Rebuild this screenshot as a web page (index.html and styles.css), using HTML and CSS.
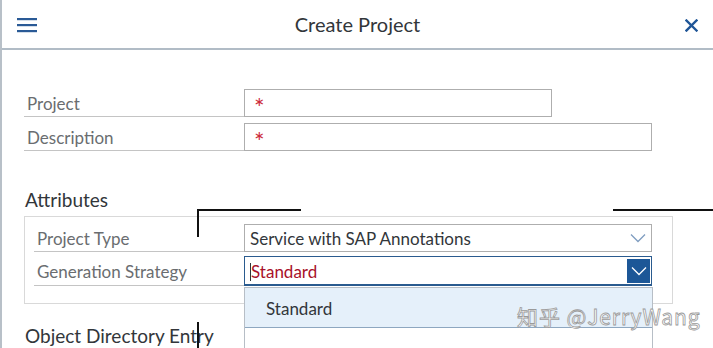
FILE: index.html
```html
<!DOCTYPE html>
<html>
<head>
<meta charset="utf-8">
<link rel="stylesheet" href="styles.css">
</head>
<body>
<div class="dialog">
  <header class="bar">
    <span class="menu">
      <svg width="20" height="16" viewBox="0 0 20 16"><rect x="0" y="1" width="20" height="2.2" fill="#2a5a96"/><rect x="0" y="7" width="20" height="2.2" fill="#2a5a96"/><rect x="0" y="13" width="20" height="2.2" fill="#2a5a96"/></svg>
    </span>
    <span class="title">Create Project</span>
    <span class="close">
      <svg width="13" height="13" viewBox="0 0 13 13"><path d="M1.5 1.5 L11.5 11.5 M11.5 1.5 L1.5 11.5" stroke="#1f5597" stroke-width="2.4" stroke-linecap="square"/></svg>
    </span>
  </header>

  <div class="content">
    <div class="row">
      <div class="label">Project</div>
      <div class="input short"><span class="req">*</span></div>
    </div>
    <div class="row">
      <div class="label">Description</div>
      <div class="input"><span class="req">*</span></div>
    </div>

    <h2 class="section">Attributes</h2>
    <div class="panel">
      <div class="row">
        <div class="label inner">Project Type</div>
        <div class="input select">
          <span class="val">Service with SAP Annotations</span>
          <span class="arrow">
            <svg width="16" height="10" viewBox="0 0 16 10"><path d="M1 1.5 L8 8.5 L15 1.5" fill="none" stroke="#7f9dc0" stroke-width="1.3"/></svg>
          </span>
        </div>
      </div>
      <div class="row">
        <div class="label inner low">Generation Strategy</div>
        <div class="input select focus">
          <span class="caret"></span><span class="val red">Standard</span>
          <span class="btn">
            <svg width="16" height="10" viewBox="0 0 16 10"><path d="M1 1.5 L8 8.5 L15 1.5" fill="none" stroke="#ffffff" stroke-width="1.3"/></svg>
          </span>
        </div>
      </div>
    </div>

    <h2 class="section second">Object Directory Entry</h2>
  </div>

  <div class="popover">
    <div class="item">Standard</div>
  </div>

  <div class="mark h1"></div>
  <div class="mark v1"></div>
  <div class="mark h2"></div>
  <div class="mark v2"></div>

  <div class="watermark">知乎 @JerryWang</div>
</div>
</body>
</html>
```

FILE: styles.css
```css
html, body {
  margin: 0;
  padding: 0;
  background: #ffffff;
}
body {
  width: 713px;
  height: 348px;
  overflow: hidden;
  font-family: "Lato", "Open Sans", sans-serif;
}
.dialog {
  position: relative;
  width: 713px;
  height: 348px;
  border-left: 2px solid #b8c0c8;
  box-sizing: border-box;
}
.bar {
  height: 48px;
  border-bottom: 2px solid #b1bcc6;
  display: flex;
  align-items: center;
  padding: 0 16px 0 15px;
}
.menu {
  flex: 1;
  display: flex;
  padding-top: 1px;
}
.title {
  font-size: 20px;
  color: #32363a;
  padding-bottom: 1px;
}
.close {
  flex: 1;
  display: flex;
  justify-content: flex-end;
  padding-top: 2px;
  margin-right: -1px;
}
.content {
  padding: 39px 0 0 22px;
}
.row {
  display: flex;
  height: 28px;
  margin-bottom: 6px;
}
.label {
  width: 217px;
  padding-left: 3px;
  padding-top: 2px;
  height: 25px;
  border-bottom: 1px solid #c4c4c4;
  font-size: 17px;
  color: #6a6d70;
  line-height: 26px;
}
.input {
  border: 1px solid #aeaeae;
  display: flex;
  align-items: center;
  padding-left: 9px;
  box-sizing: border-box;
  width: 408px;
  height: 28px;
}
.input.short {
  width: 308px;
}
.req {
  color: #cc2a3a;
  font-size: 25px;
  line-height: 1;
  padding-top: 9px;
}
.section {
  margin: 37px 0 0 1px;
  font-size: 19px;
  font-weight: normal;
  color: #32363a;
  line-height: 24px;
}
.panel {
  margin-top: 4px;
  width: 649px;
  height: 88px;
  border: 1px solid #d9d9d9;
  box-sizing: border-box;
  padding: 7px 0 0 9px;
}
.panel .row {
  margin-bottom: 4px;
}
.label.inner {
  width: 207px;
  padding-left: 3px;
}
.label.low {
  padding-top: 3px;
  height: 26px;
}
.select {
  padding-left: 5px;
  justify-content: flex-start;
}
.val {
  font-size: 17px;
  color: #32363a;
  flex: 1;
}
.val.red {
  color: #a8112a;
  padding-top: 2px;
}
.caret {
  width: 1px;
  height: 18px;
  margin-top: 2px;
  background: #32363a;
}
.arrow {
  display: flex;
  margin-right: 5px;
}
.focus {
  border: 1px solid #2a5b8f;
  border-width: 1px 1px 2px 1px;
  height: 30px;
}
.btn {
  width: 23px;
  height: 24px;
  background: #1c5797;
  display: flex;
  align-items: center;
  justify-content: center;
  margin-right: 1px;
}
.section.second {
  margin-top: 20px;
}
.popover {
  position: absolute;
  left: 242px;
  top: 287px;
  width: 409px;
  height: 70px;
  background: #ffffff;
  border: 1px solid #b7bec6;
  box-sizing: border-box;
}
.item {
  height: 39px;
  background: #e5f0fa;
  border-bottom: 1px solid #8ea7c0;
  font-size: 17px;
  color: #32363a;
  line-height: 41px;
  padding-left: 21px;
}
.mark {
  position: absolute;
  background: #111111;
}
.mark.h1 { left: 195px; top: 209px; width: 104px; height: 2px; }
.mark.v1 { left: 195px; top: 209px; width: 2px; height: 28px; }
.mark.h2 { left: 611px; top: 209px; width: 102px; height: 2px; }
.mark.v2 { left: 195px; top: 322px; width: 2px; height: 30px; }
.watermark {
  position: absolute;
  left: 515px;
  top: 301px;
  font-family: "Noto Sans CJK SC", "Noto Sans", sans-serif;
  font-size: 21px;
  color: #ffffff;
  -webkit-text-stroke: 0.8px #9a9a9a;
  letter-spacing: 0.9px;
}
```
